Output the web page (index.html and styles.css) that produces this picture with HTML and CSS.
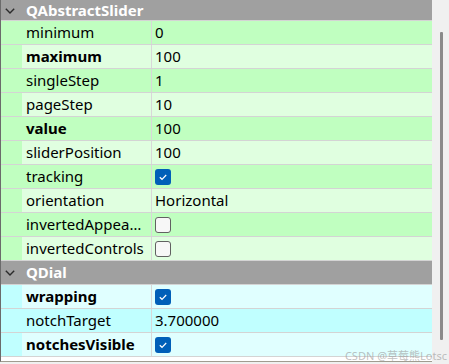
FILE: index.html
```html
<!DOCTYPE html>
<html lang="zh">
<head>
    <meta charset="UTF-8">
    <meta name="viewport" content="width=device-width, initial-scale=1.0">
    <title>Property Editor</title>
    <link rel="stylesheet" href="styles.css">
</head>
<body>
    <div class="window">
        <div class="tree">
            <div class="group-header first">
                <svg class="chevron" width="10" height="6" viewBox="0 0 10 6"><polyline points="0.8,0.8 5,5 9.2,0.8" fill="none" stroke="#2b2b2b" stroke-width="1.4"/></svg>
                <span>QAbstractSlider</span>
            </div>
            <div class="row slider dark"><div class="indent"></div><div class="name">minimum</div><div class="value">0</div></div>
            <div class="row slider"><div class="indent"></div><div class="name bold">maximum</div><div class="value">100</div></div>
            <div class="row slider dark"><div class="indent"></div><div class="name">singleStep</div><div class="value">1</div></div>
            <div class="row slider"><div class="indent"></div><div class="name">pageStep</div><div class="value">10</div></div>
            <div class="row slider dark"><div class="indent"></div><div class="name bold">value</div><div class="value">100</div></div>
            <div class="row slider"><div class="indent"></div><div class="name">sliderPosition</div><div class="value">100</div></div>
            <div class="row slider dark"><div class="indent"></div><div class="name">tracking</div><div class="value"><span class="check on"></span></div></div>
            <div class="row slider"><div class="indent"></div><div class="name">orientation</div><div class="value">Horizontal</div></div>
            <div class="row slider dark"><div class="indent"></div><div class="name">invertedAppea…</div><div class="value"><span class="check"></span></div></div>
            <div class="row slider"><div class="indent"></div><div class="name">invertedControls</div><div class="value"><span class="check"></span></div></div>

            <div class="group-header">
                <svg class="chevron" width="10" height="6" viewBox="0 0 10 6"><polyline points="0.8,0.8 5,5 9.2,0.8" fill="none" stroke="#2b2b2b" stroke-width="1.4"/></svg>
                <span>QDial</span>
            </div>
            <div class="row dial"><div class="indent"></div><div class="name bold">wrapping</div><div class="value"><span class="check on"></span></div></div>
            <div class="row dial dark"><div class="indent"></div><div class="name">notchTarget</div><div class="value">3.700000</div></div>
            <div class="row dial"><div class="indent"></div><div class="name bold">notchesVisible</div><div class="value"><span class="check on"></span></div></div>
        </div>
        <div class="scrollbar"><div class="thumb"></div></div>
        <div class="watermark">CSDN @草莓熊Lotsc</div>
    </div>
</body>
</html>
```

FILE: styles.css
```css
body {
    margin: 0;
    padding: 0;
    font-family: "Noto Sans", "Noto Sans CJK SC", sans-serif;
    font-size: 15px;
    color: #000;
    background-color: #f0f0f0;
}
.window {
    position: relative;
    display: flex;
    width: 449px;
    height: 364px;
    overflow: hidden;
    background-color: #f0f0f0;
}
.tree {
    width: 432px;
    height: 362px;
    box-sizing: border-box;
    border-left: 1px solid #6b6b6b;
    border-bottom: 1px solid #a09c90;
    background-color: #fff;
    overflow: hidden;
}
.group-header {
    display: flex;
    align-items: center;
    height: 24px;
    box-sizing: border-box;
    border-bottom: 1px solid #d4d4d4;
    background-color: #a0a0a0;
    color: #fff;
    font-weight: bold;
    line-height: 23px;
}
.group-header.first {
    height: 21px;
    line-height: 20px;
}
.chevron {
    margin-left: 4px;
    margin-right: 11px;
    margin-top: 1px;
}
.row {
    display: grid;
    grid-template-columns: 21px 129px 1fr;
    height: 24px;
    box-sizing: border-box;
    border-bottom: 1px solid #d4d4d4;
    line-height: 23px;
}
.name {
    padding-left: 4px;
    white-space: nowrap;
    overflow: hidden;
}
.bold {
    font-weight: bold;
}
.value {
    display: flex;
    align-items: center;
    padding-left: 3px;
    border-left: 1px solid #d8d8d8;
    white-space: nowrap;
}
.slider .indent,
.slider.dark .name,
.slider.dark .value {
    background-color: #c0ffc0;
}
.slider .name,
.slider .value {
    background-color: #e0ffe0;
}
.dial .indent,
.dial.dark .name,
.dial.dark .value {
    background-color: #c0ffff;
}
.dial .name,
.dial .value {
    background-color: #e0ffff;
}
.check {
    width: 16px;
    height: 16px;
    box-sizing: border-box;
    border: 1px solid #616161;
    border-radius: 3px;
    background-color: #f7f7f7;
}
.check.on {
    border: none;
    background-color: #005fb8;
    background-image: url("data:image/svg+xml,%3Csvg xmlns='http://www.w3.org/2000/svg' width='16' height='16'%3E%3Cpolyline points='4.8,8.3 7,10.3 11.2,6' fill='none' stroke='white' stroke-width='1.2'/%3E%3C/svg%3E");
}
.scrollbar {
    width: 17px;
    background-color: #f0f0f0;
}
.thumb {
    width: 3px;
    height: 308px;
    margin-top: 32px;
    margin-left: 8px;
    border-radius: 1px;
    background-color: #8a8a8a;
}
.watermark {
    position: absolute;
    right: 2px;
    bottom: 1px;
    font-size: 11px;
    color: rgba(150, 150, 150, 0.6);
    white-space: nowrap;
}
```
